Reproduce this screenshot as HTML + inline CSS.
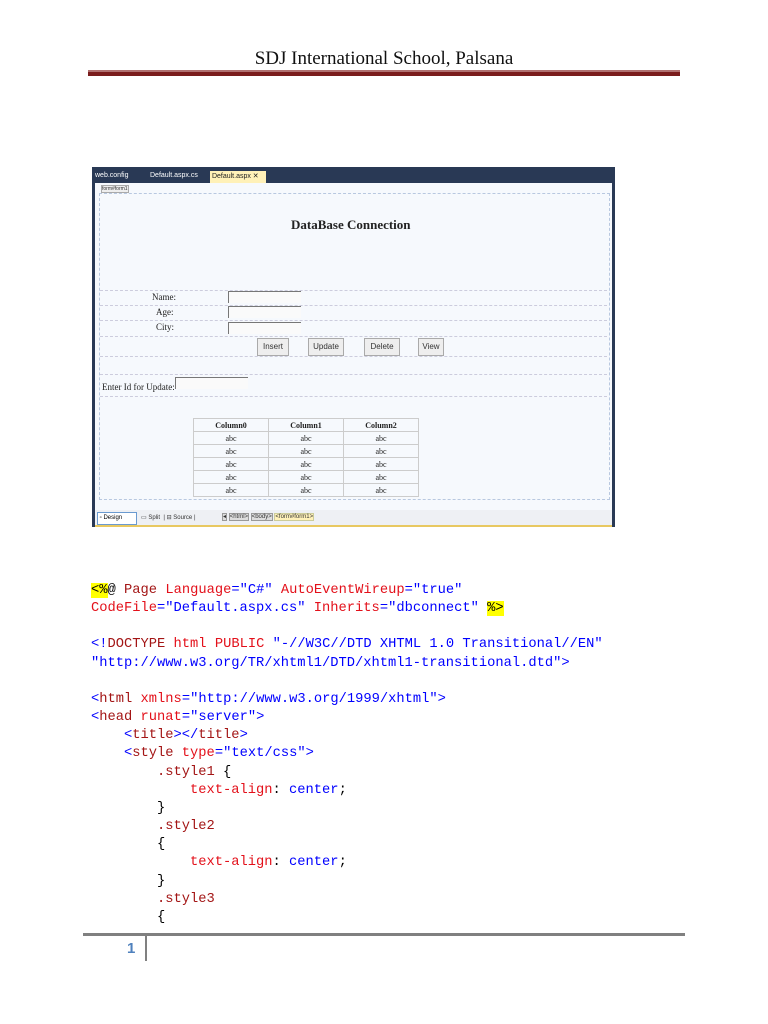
<!DOCTYPE html>
<html><head><style>
body{margin:0;width:768px;height:1024px;background:#fff;position:relative;overflow:hidden;font-family:"Liberation Sans",sans-serif}
.abs{position:absolute}
.hdr{left:0;width:768px;top:48px;text-align:center;font-family:"Liberation Serif",serif;font-size:19px;color:#111}
.code{left:91px;top:582px;font-family:"Liberation Mono",monospace;font-size:13.75px;line-height:18.15px;white-space:pre;color:#00f}
.r{color:#e3101a}.m{color:#a31515}.k{color:#000}.y{background:#ff0}
.ser{font-family:"Liberation Serif",serif;color:#222}
.btn{position:absolute;top:338px;height:16px;border:1px solid #aaa;background:#eee;font-size:8px;line-height:16px;text-align:center;color:#333}
.in{position:absolute;width:72px;height:11px;border-top:1px solid #777;border-left:1px solid #777;background:#fafafa}
table{border-collapse:collapse;font-family:"Liberation Serif",serif;font-size:8px;color:#222}
td,th{border:1px solid #ccc;width:74px;height:12px;text-align:center;padding:0}
.dl{position:absolute;left:100px;width:507px;border-top:1px dashed #ccd}
</style></head><body>
<div class="abs hdr">SDJ International School, Palsana</div>
<div class="abs" style="left:88px;top:70px;width:592px;height:2px;background:#b07070"></div>
<div class="abs" style="left:88px;top:72px;width:592px;height:4px;background:#7a1c1c"></div>

<div class="abs" style="left:92px;top:167px;width:523px;height:360px;background:#293955"></div>
<div class="abs" style="left:95px;top:172px;font-size:7px;color:#fff">web.config</div>
<div class="abs" style="left:150px;top:172px;font-size:7px;color:#fff">Default.aspx.cs</div>
<div class="abs" style="left:210px;top:171px;width:56px;height:12px;background:#fff1b8;font-size:7px;line-height:12px;color:#222">&nbsp;Default.aspx ✕</div>
<div class="abs" style="left:95px;top:183px;width:517px;height:328px;background:#f6f9fd"></div>
<div class="abs" style="left:101px;top:185px;font-size:5px;color:#333;border:1px solid #aaa;background:#eee">form#form1</div>
<div class="abs" style="left:99px;top:193px;width:509px;height:305px;border:1px dashed #b8c8e0"></div>
<div class="abs ser" style="left:291px;top:217px;font-size:13px;font-weight:bold">DataBase Connection</div>
<div class="dl" style="top:290px"></div><div class="dl" style="top:305px"></div><div class="dl" style="top:320px"></div><div class="dl" style="top:336px"></div><div class="dl" style="top:356px"></div><div class="dl" style="top:374px"></div><div class="dl" style="top:396px"></div>
<div class="abs ser" style="left:152px;top:292px;font-size:9px">Name:</div>
<div class="abs ser" style="left:156px;top:307px;font-size:9px">Age:</div>
<div class="abs ser" style="left:156px;top:322px;font-size:9px">City:</div>
<div class="in" style="left:228px;top:291px"></div><div class="in" style="left:228px;top:306px"></div><div class="in" style="left:228px;top:322px"></div>
<div class="btn" style="left:257px;width:30px">Insert</div>
<div class="btn" style="left:308px;width:34px">Update</div>
<div class="btn" style="left:364px;width:34px">Delete</div>
<div class="btn" style="left:418px;width:24px">View</div>
<div class="abs ser" style="left:102px;top:382px;font-size:9px">Enter Id for Update:</div>
<div class="in" style="left:175px;top:377px"></div>
<table class="abs" style="left:193px;top:418px"><tr><th>Column0</th><th>Column1</th><th>Column2</th></tr>
<tr><td>abc</td><td>abc</td><td>abc</td></tr><tr><td>abc</td><td>abc</td><td>abc</td></tr><tr><td>abc</td><td>abc</td><td>abc</td></tr><tr><td>abc</td><td>abc</td><td>abc</td></tr><tr><td>abc</td><td>abc</td><td>abc</td></tr></table>
<div class="abs" style="left:95px;top:510px;width:517px;height:15px;background:#eef0f4;border-bottom:2px solid #e8c860"></div>
<div class="abs" style="left:97px;top:512px;width:38px;height:11px;border:1px solid #6a9ad0;background:#fff;font-size:6px;line-height:11px">&nbsp;▫ Design</div>
<div class="abs" style="left:141px;top:514px;font-size:6px;color:#333">▭ Split &nbsp;| ⊟ Source |</div>
<div class="abs" style="left:222px;top:512px;font-size:6px;color:#333;line-height:11px"><span style="border:1px solid #999;background:#ddd">◂</span> <span style="border:1px solid #999;background:#ddd">&lt;html&gt;</span> <span style="border:1px solid #999;background:#ddd">&lt;body&gt;</span> <span style="border:1px solid #cc9;background:#fff1b8">&lt;form#form1&gt;</span></div>

<div class="abs code"><span class="k y">&lt;%</span><span class="k">@</span> <span class="m">Page</span> <span class="r">Language</span>="C#" <span class="r">AutoEventWireup</span>="true"
<span class="r">CodeFile</span>="Default.aspx.cs" <span class="r">Inherits</span>="dbconnect" <span class="k y">%&gt;</span>

&lt;!<span class="m">DOCTYPE</span> <span class="r">html</span> <span class="r">PUBLIC</span> "-//W3C//DTD XHTML 1.0 Transitional//EN"
"http://www.w3.org/TR/xhtml1/DTD/xhtml1-transitional.dtd"&gt;

&lt;<span class="m">html</span> <span class="r">xmlns</span>="http://www.w3.org/1999/xhtml"&gt;
&lt;<span class="m">head</span> <span class="r">runat</span>="server"&gt;
    &lt;<span class="m">title</span>&gt;&lt;/<span class="m">title</span>&gt;
    &lt;<span class="m">style</span> <span class="r">type</span>="text/css"&gt;
<span class="m">        .style1</span><span class="k"> {</span>
<span class="r">            text-align</span><span class="k">: </span>center<span class="k">;</span>
<span class="k">        }</span>
<span class="m">        .style2</span>
<span class="k">        {</span>
<span class="r">            text-align</span><span class="k">: </span>center<span class="k">;</span>
<span class="k">        }</span>
<span class="m">        .style3</span>
<span class="k">        {</span></div>

<div class="abs" style="left:83px;top:933px;width:602px;height:3px;background:#808080"></div>
<div class="abs" style="left:145px;top:936px;width:2px;height:25px;background:#808080"></div>
<div class="abs" style="left:127px;top:940px;font-size:15px;font-weight:bold;color:#4f81bd">1</div>
</body></html>
